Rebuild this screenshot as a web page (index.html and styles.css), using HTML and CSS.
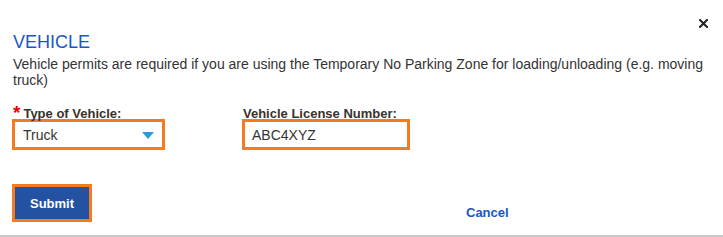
FILE: index.html
```html
<!DOCTYPE html>
<html>
<head>
<meta charset="utf-8">
<link rel="stylesheet" href="styles.css">
</head>
<body>
<div class="modal">
  <div class="modal-top">
    <svg class="close" width="9" height="9" viewBox="0 0 9 9"><path d="M1 1 L8 8 M8 1 L1 8" stroke="#222" stroke-width="2" stroke-linecap="square"/></svg>
  </div>
  <h2 class="title">VEHICLE</h2>
  <p class="desc">Vehicle permits are required if you are using the Temporary No Parking Zone for loading/unloading (e.g. moving truck)</p>
  <div class="fields">
    <div class="field field-type">
      <label class="label"><span class="req">*</span>Type of Vehicle:</label>
      <div class="box select">
        <span class="value">Truck</span>
        <svg class="caret" width="12" height="7" viewBox="0 0 12 7"><polygon points="0,0 12,0 6,7" fill="#2a9be3"/></svg>
      </div>
    </div>
    <div class="field field-plate">
      <label class="label">Vehicle License Number:</label>
      <div class="box input"><span class="value">ABC4XYZ</span></div>
    </div>
  </div>
  <div class="actions">
    <button class="submit">Submit</button>
    <a class="cancel">Cancel</a>
  </div>
</div>
</body>
</html>
```
FILE: styles.css
```css
html, body {
  margin: 0;
  padding: 0;
  background: #fff;
}
body {
  font-family: "Liberation Sans", Arial, sans-serif;
  color: #333;
}
.modal {
  height: 235px;
  border-bottom: 2px solid #c8c8c8;
  padding: 0 12px 0 13px;
  box-sizing: content-box;
}
.modal-top {
  display: flex;
  justify-content: flex-end;
  height: 32px;
}
.close {
  display: block;
  margin-top: 19px;
  margin-right: 3px;
}
.title {
  margin: 0 0 3px;
  font-size: 18px;
  font-weight: normal;
  color: #1a56c8;
  line-height: 21px;
}
.desc {
  margin: 0;
  font-size: 14px;
  line-height: 16px;
  color: #333;
}
.fields {
  display: flex;
  gap: 77px;
  margin-top: 18px;
  margin-left: -1px;
}
.label {
  display: block;
  font-size: 13px;
  font-weight: bold;
  color: #333;
  line-height: 15px;
  height: 13px;
}
.req {
  color: #e00;
  font-size: 19px;
  margin-left: 1px;
  margin-right: 3px;
  vertical-align: -1px;
  line-height: 10px;
}
.field-plate .label { padding-left: 1px; }
.box {
  box-sizing: border-box;
  height: 31px;
  border: 3px solid #f47b20;
  display: flex;
  align-items: center;
  font-size: 14px;
  color: #333;
}
.select {
  width: 153px;
  padding: 0 8px;
  justify-content: space-between;
}
.caret { margin-top: 1px; }
.input {
  width: 168px;
  padding-left: 7px;
}
.actions {
  display: flex;
  align-items: flex-end;
  margin-top: 34px;
  margin-left: -1px;
}
.submit {
  box-sizing: border-box;
  width: 80px;
  height: 38px;
  background: #2352a3;
  border: 3px solid #f47b20;
  color: #fff;
  font-family: "Liberation Sans", Arial, sans-serif;
  font-weight: bold;
  font-size: 13px;
  padding: 0;
  margin: 0;
}
.cancel {
  margin-left: 374px;
  font-size: 13px;
  font-weight: bold;
  color: #1a56c8;
  line-height: 15px;
  margin-bottom: 2px;
}
```
